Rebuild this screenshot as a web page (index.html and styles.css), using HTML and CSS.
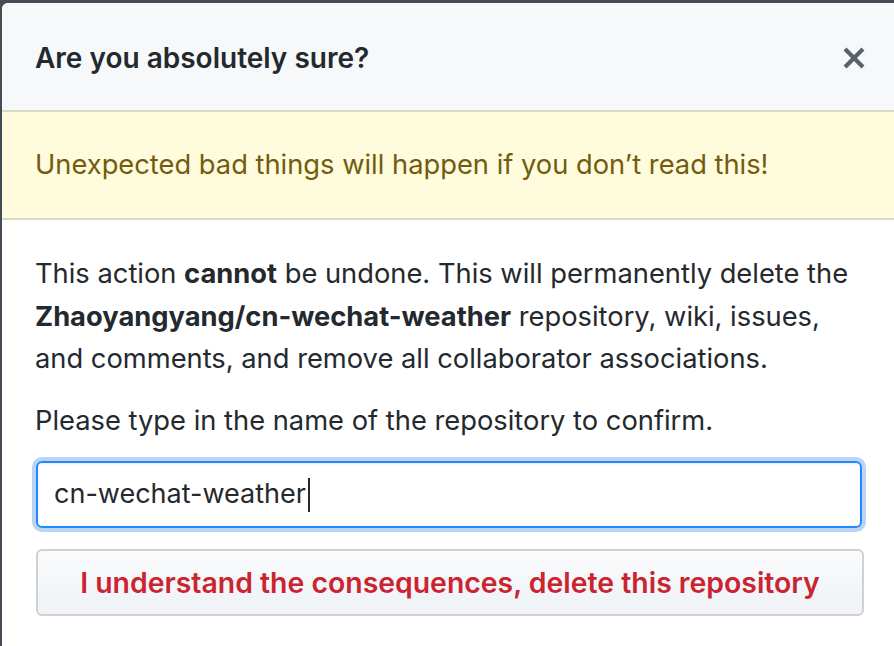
FILE: index.html
```html
<!DOCTYPE html>
<html lang="en">
<head>
    <meta charset="UTF-8">
    <title>Delete repository</title>
    <link rel="stylesheet" href="styles.css">
</head>
<body>

    <div class="dialog">
        <div class="dialog-header">
            <h3 class="dialog-title">Are you absolutely sure?</h3>
            <button type="button" class="close-button" aria-label="Close">
                <svg width="24" height="32" viewBox="0 0 12 16" aria-hidden="true">
                    <path fill="currentColor" d="M7.48 8l3.75 3.75-1.48 1.48L6 9.48l-3.75 3.75-1.48-1.48L4.52 8 .77 4.25l1.48-1.48L6 6.52l3.75-3.75 1.48 1.48L7.48 8z"/>
                </svg>
            </button>
        </div>

        <div class="flash-warn">
            Unexpected bad things will happen if you don’t read this!
        </div>

        <div class="dialog-body">
            <p>This action <strong>cannot</strong> be undone. This will permanently delete the <strong>Zhaoyangyang/cn-wechat-weather</strong> repository, wiki, issues, and comments, and remove all collaborator associations.</p>
            <p>Please type in the name of the repository to confirm.</p>
            <div class="form-control">cn-wechat-weather<span class="caret"></span></div>
            <button type="button" class="btn-danger">I understand the consequences, delete this repository</button>
        </div>
    </div>

</body>
</html>
```

FILE: styles.css
```css
body {
    margin: 0;
    padding: 3px 0 0 2px;
    background-color: #444d56;
    font-family: 'Inter', 'Liberation Sans', sans-serif;
    font-size: 28px;
    line-height: 1.5;
    color: #24292e;
    overflow: hidden;
}

.dialog {
    width: 892px;
    height: 700px;
    background: #fff;
    border-top-left-radius: 6px;
}

.dialog-header {
    display: flex;
    align-items: center;
    justify-content: space-between;
    height: 107px;
    padding: 2px 28px 0 33px;
    box-sizing: border-box;
    background-color: #f6f8fa;
    border-top-left-radius: 6px;
}

.dialog-title {
    margin: 0;
    font-size: 28px;
    font-weight: 600;
}

.close-button {
    display: flex;
    padding: 0;
    border: none;
    background: none;
    color: #586069;
}

.flash-warn {
    height: 106px;
    padding: 0 33px;
    display: flex;
    align-items: center;
    background-color: #fffbdd;
    color: #735c0f;
    font-size: 27.3px;
    border-top: 2px solid #dcdac4;
    border-bottom: 2px solid #dcdac4;
}

.dialog-body {
    padding: 33px 32px 0 33px;
}

.dialog-body p {
    margin: 0 0 19px;
    font-size: 27.3px;
    line-height: 42.5px;
}

.dialog-body strong {
    font-weight: 700;
}

.form-control {
    display: flex;
    align-items: center;
    height: 63px;
    margin: 0 0 21px 1px;
    padding: 0 16px;
    border: 2px solid #2188ff;
    border-radius: 6px;
    box-shadow: inset 0 1px 2px rgba(27, 31, 35, 0.075), 0 0 0 4px rgba(3, 102, 214, 0.28);
    font-size: 27px;
}

.caret {
    display: inline-block;
    width: 2px;
    height: 34px;
    margin-left: 2px;
    background: #24292e;
}

.btn-danger {
    display: block;
    width: 828px;
    height: 67px;
    margin-left: 1px;
    padding: 0;
    border: 2px solid #cfd1d4;
    border-radius: 6px;
    background-image: linear-gradient(-180deg, #fafbfc 0%, #eff3f6 90%);
    color: #cb2431;
    font-family: 'Inter', 'Liberation Sans', sans-serif;
    font-size: 28.4px;
    font-weight: 600;
}
```
